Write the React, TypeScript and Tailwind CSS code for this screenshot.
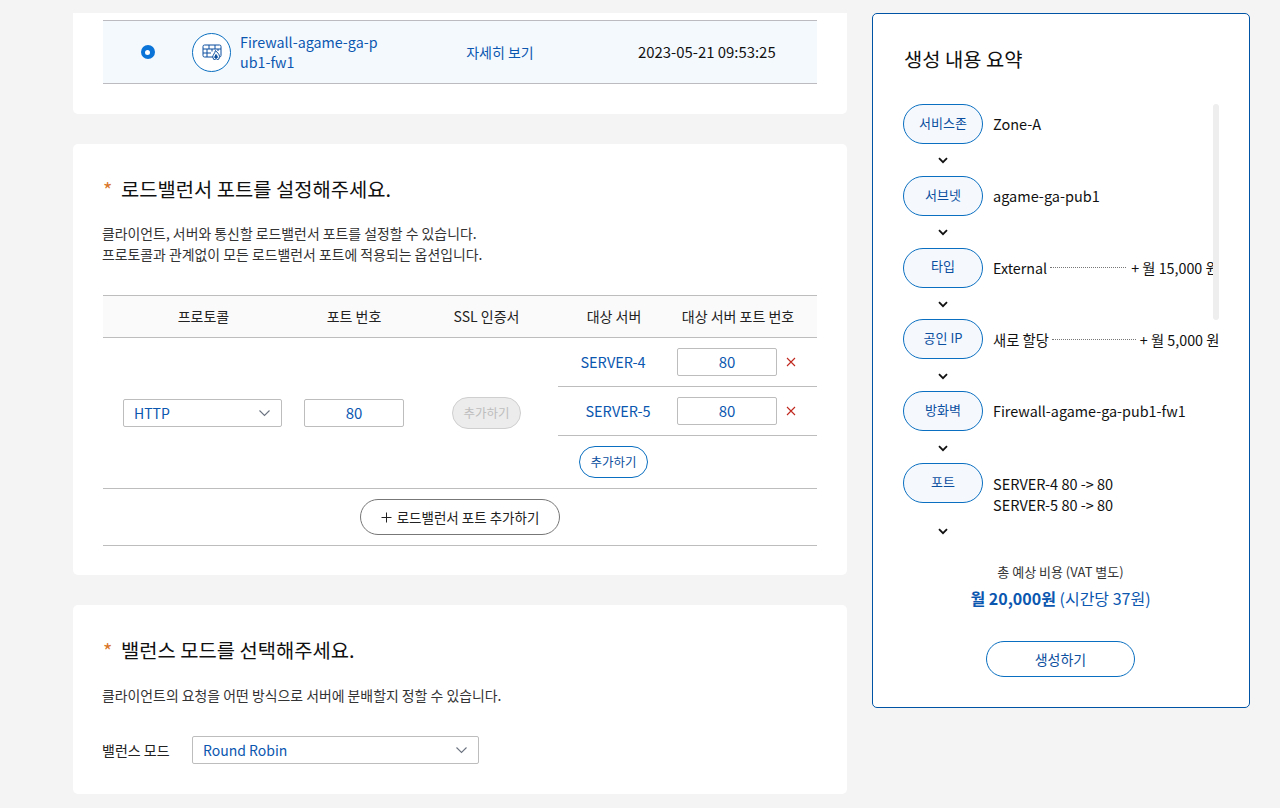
import React from "react";

const Chevron = ({ className = "" }: { className?: string }) => (
  <svg width="13" height="8" viewBox="0 0 13 8" fill="none" className={className}>
    <path d="M1.5 1.5L6.5 6.5L11.5 1.5" stroke="#6b7280" strokeWidth="1.1" />
  </svg>
);

const SmallChevron = () => (
  <svg width="10" height="7" viewBox="0 0 10 7" fill="none">
    <path d="M1 1.2L5 5.2L9 1.2" stroke="#111" strokeWidth="1.8" />
  </svg>
);

const Cross = () => (
  <svg width="10" height="10" viewBox="0 0 10 10" fill="none">
    <path d="M1 1L9 9M9 1L1 9" stroke="#c0281e" strokeWidth="1.1" />
  </svg>
);

const FirewallIcon = () => (
  <svg width="20" height="16" viewBox="0 0 20 16" fill="none" stroke="#0b4f9e" strokeWidth="1">
    <path d="M12 13H2.5A1.5 1.5 0 0 1 1 11.5V2.5A1.5 1.5 0 0 1 2.5 1H17.5A1.5 1.5 0 0 1 19 2.5V11.5A1.5 1.5 0 0 1 17.5 13" />
    <path d="M1 5H19M1 9H9M7 1V5M13 1V5M5 5V9M10 5V7.5M5 9V13M16 5V7" />
    <path d="M13.5 6.5C15 8.5 17.5 10 17.5 12.5A3.4 3.4 0 0 1 10.7 13C10.7 11 12.8 9.5 13.5 6.5Z" fill="#fff" />
    <path d="M14 10.5C15 11.8 15.6 12.6 15.2 13.8A1.4 1.4 0 0 1 12.7 13.2C12.7 12.4 13.6 11.8 14 10.5Z" fill="#0b4f9e" />
  </svg>
);

const NumInput = ({ className = "" }: { className?: string }) => (
  <div className={`w-[100px] h-7 border border-[#bdbdbd] rounded-[2px] bg-white flex items-center justify-center text-[#0b57b0] text-[15px] ${className}`}>
    80
  </div>
);

const Heading = ({ children }: { children: React.ReactNode }) => (
  <div className="flex items-center">
    <span className="w-[18px] text-[#d9772b] text-[20px] leading-none pt-[2px]">*</span>
    <h2 className="text-[19.85px] leading-7 text-[#111] font-normal">{children}</h2>
  </div>
);

const steps: { label: string; lines: React.ReactNode; tall?: boolean }[] = [
  { label: "서비스존", lines: "Zone-A" },
  { label: "서브넷", lines: "agame-ga-pub1" },
  {
    label: "타입",
    lines: (
      <span className="flex items-center whitespace-nowrap text-[14.3px]">
        External
        <span className="w-[76px] ml-[3px] mr-[5px] border-t border-dotted border-[#777]" />+ 월 15,000 원
      </span>
    ),
  },
  {
    label: "공인 IP",
    lines: (
      <span className="flex items-center whitespace-nowrap text-[14.3px]">
        새로 할당
        <span className="w-[84px] ml-[3px] mr-[4px] border-t border-dotted border-[#777]" />+ 월 5,000 원
      </span>
    ),
  },
  { label: "방화벽", lines: <span className="text-[14.35px]">Firewall-agame-ga-pub1-fw1</span> },
  {
    label: "포트",
    tall: true,
    lines: (
      <div className="pt-[10px] leading-[21px]">
        <div>SERVER-4 80 -&gt; 80</div>
        <div>SERVER-5 80 -&gt; 80</div>
      </div>
    ),
  },
];

export default function App() {
  return (
    <div className="h-[808px] overflow-hidden bg-[#f4f4f4] flex items-start pt-[13px] pl-[73px] gap-[25px] text-[#222] font-['Noto_Sans_CJK_KR','Noto_Sans',sans-serif]">
      <div className="w-[774px] flex flex-col gap-[30px] shrink-0">
        {/* Firewall list tail */}
        <section className="bg-white rounded-b-[5px] h-[101px] px-[30px] pt-[7px]">
          <div className="h-[64px] bg-[#f4f9fe] border-y border-[#bcbcc0] flex items-center text-[14px]">
            <div className="w-[89px] flex justify-center">
              <span className="w-[14px] h-[14px] rounded-full bg-[#0a74d8] flex items-center justify-center">
                <span className="w-[5px] h-[5px] rounded-full bg-white" />
              </span>
            </div>
            <div className="w-[39px] h-[39px] rounded-full border-[1.5px] border-[#0a6fc0] bg-white flex items-center justify-center">
              <FirewallIcon />
            </div>
            <div className="ml-[9px] w-[140px] text-[14.3px] text-[#0b57b0] leading-[20px] break-all">Firewall-agame-ga-pub1-fw1</div>
            <div className="ml-[85px] text-[#0b57b0] w-[70px] text-center">자세히 보기</div>
            <div className="ml-[103px] text-[14.9px] text-[#111] whitespace-nowrap">2023-05-21 09:53:25</div>
          </div>
        </section>

        {/* Port section */}
        <section className="bg-white rounded-[5px] h-[431px] px-[30px] pt-[31px]">
          <Heading>로드밸런서 포트를 설정해주세요.</Heading>
          <p className="mt-[20px] -ml-px text-[13.9px] leading-[21px] text-[#333]">
            클라이언트, 서버와 통신할 로드밸런서 포트를 설정할 수 있습니다.
            <br />
            프로토콜과 관계없이 모든 로드밸런서 포트에 적용되는 옵션입니다.
          </p>
          <div className="mt-[30px] h-[43px] bg-[#fafafa] border-y border-[#bdbdbd] flex items-center text-[14px] text-[#222] text-center">
            <div className="w-[201px]">프로토콜</div>
            <div className="w-[100px]">포트 번호</div>
            <div className="w-[165px]">SSL 인증서</div>
            <div className="w-[90px]">대상 서버</div>
            <div className="w-[158px]">대상 서버 포트 번호</div>
          </div>
          <div className="flex h-[151px] border-b border-[#bdbdbd]">
            <div className="w-[201px] flex items-center pl-[20px]">
              <div className="w-[159px] h-7 border border-[#bdbdbd] rounded-[2px] flex items-center justify-between pl-[10px] pr-[10px] text-[14px] text-[#0b57b0]">
                HTTP
                <Chevron />
              </div>
            </div>
            <div className="w-[100px] flex items-center">
              <NumInput />
            </div>
            <div className="w-[154px] flex items-center pl-[48px]">
              <button className="w-[69px] h-8 rounded-full border border-[#cfcfcf] bg-[#ececec] text-[12.5px] text-[#bdbdbd]">추가하기</button>
            </div>
            <div className="w-[259px] flex flex-col text-[14.5px] text-[#0b57b0]">
              <div className="h-[49px] border-b border-[#bdbdbd] flex items-center">
                <div className="w-[119px] pr-[9px] text-center">SERVER-4</div>
                <NumInput />
                <div className="ml-[9px]"><Cross /></div>
              </div>
              <div className="h-[49px] border-b border-[#bdbdbd] flex items-center">
                <div className="w-[119px] pl-[1px] text-center">SERVER-5</div>
                <NumInput />
                <div className="ml-[9px]"><Cross /></div>
              </div>
              <div className="flex-1 flex items-center pl-[21px]">
                <button className="w-[69px] h-8 rounded-full border border-[#0a6fc0] bg-white text-[12.5px] text-[#0b4f9e]">추가하기</button>
              </div>
            </div>
          </div>
          <div className="h-[57px] border-b border-[#bdbdbd] flex items-center justify-center">
            <button className="w-[200px] h-9 rounded-full border border-[#777] bg-white text-[13.5px] text-[#222] flex items-center justify-center gap-[5px]">
              <svg width="11" height="11" viewBox="0 0 11 11" fill="none"><path d="M5.5 0.5V10.5M0.5 5.5H10.5" stroke="#222" strokeWidth="1" /></svg>
              로드밸런서 포트 추가하기
            </button>
          </div>
        </section>

        {/* Balance mode */}
        <section className="bg-white rounded-[5px] h-[189px] px-[30px] pt-[31px]">
          <Heading>밸런스 모드를 선택해주세요.</Heading>
          <p className="mt-[21px] -ml-px text-[13.9px] leading-[21px] text-[#333]">클라이언트의 요청을 어떤 방식으로 서버에 분배할지 정할 수 있습니다.</p>
          <div className="mt-[30px] flex items-center">
            <span className="w-[90px] -ml-px text-[14px] text-[#222]">밸런스 모드</span>
            <div className="w-[287px] h-7 border border-[#bdbdbd] rounded-[2px] flex items-center justify-between pl-[10px] pr-[10px] text-[14px] text-[#0b57b0]">
              Round Robin
              <Chevron />
            </div>
          </div>
        </section>
      </div>

      {/* Summary */}
      <aside className="relative w-[378px] h-[695px] bg-white border border-[#0054a6] rounded-[5px] shrink-0 pl-[30px] pt-[31px]">
        <h3 className="pl-px text-[19.85px] leading-7 font-normal text-[#111]">생성 내용 요약</h3>
        <div className="mt-[31px] w-[318px] h-[436px] overflow-hidden text-[14.5px] text-[#111]">
          {steps.map((s) => (
            <div key={s.label}>
              <div className={`flex items-start ${s.tall ? "h-[52px]" : "h-10"}`}>
                <div className="w-20 h-10 shrink-0 rounded-full border border-[#0a6fc0] bg-[#f5f9fe] flex items-center justify-center text-[13px] text-[#0b4f9e] pb-[3px]">
                  {s.label}
                </div>
                <div className={`ml-[10px] ${s.tall ? "" : "h-10 flex items-center"}`}>{s.lines}</div>
              </div>
              <div className="w-20 h-[31.8px] pt-[2px] flex items-center justify-center">
                <SmallChevron />
              </div>
            </div>
          ))}
        </div>
        <span className="absolute left-[340px] top-[90px] w-[6px] h-[216px] rounded-[3px] bg-[#eeeeee]" />
        <div className="mt-[22px] w-[315px] text-center">
          <div className="text-[13px] leading-[20px] text-[#333]">총 예상 비용 (VAT 별도)</div>
          <div className="mt-[4px] text-[16px] leading-[24px] text-[#0b57b0]">
            <b className="font-bold">월 20,000원</b> (시간당 37원)
          </div>
          <button className="mt-[31px] w-[149px] h-9 rounded-full border border-[#0a6fc0] bg-white text-[14px] text-[#0b4f9e]">생성하기</button>
        </div>
      </aside>
    </div>
  );
}
